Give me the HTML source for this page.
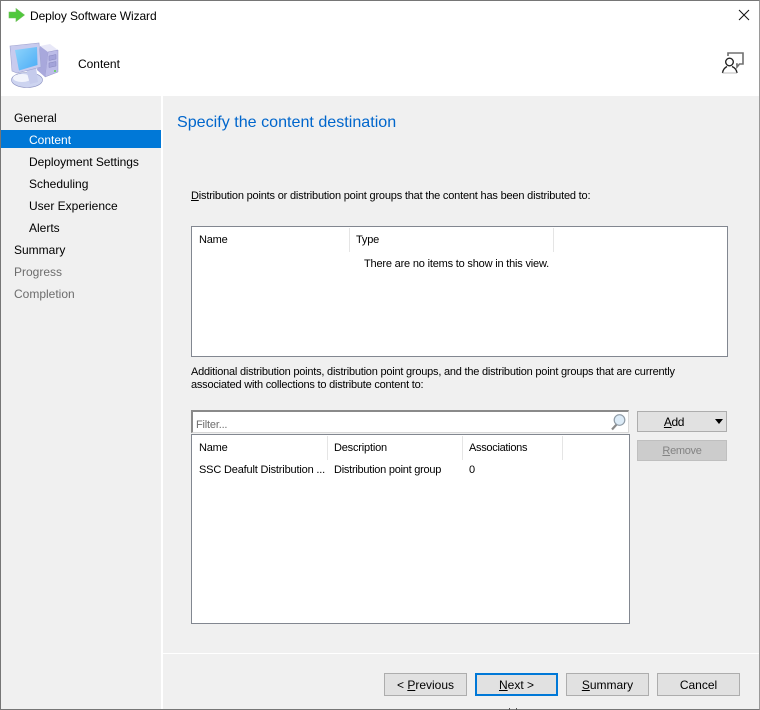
<!DOCTYPE html>
<html><head><meta charset="utf-8"><style>
html,body{margin:0;padding:0;background:#fff}
#w{position:relative;width:760px;height:710px;overflow:hidden;background:#fff;font-family:"Liberation Sans",sans-serif;font-size:12px;color:#000}
#w div{position:absolute;box-sizing:border-box;white-space:nowrap}
.t{line-height:16px;height:16px}
.m{font-size:11px;letter-spacing:-.19px}
u{text-underline-offset:1px}
.box{background:#fff;border:1px solid #828790}
.sep{width:1px;background:#e5e5e5}
.btn{background:#e1e1e1;border:1px solid #adadad;text-align:center;line-height:23px}
</style></head><body><div id="w">
<div style="left:1px;top:96px;width:160px;height:613px;background:#f0f0f0"></div>
<div style="left:163px;top:96px;width:596px;height:613px;background:#f0f0f0"></div>
<div style="left:163px;top:653px;width:596px;height:1px;background:#fff"></div>
<div style="left:0;top:0;width:760px;height:710px;border:1px solid #767676;border-right-color:#9a9a9a;z-index:5"></div>
<div style="left:509px;top:708px;width:1px;height:2px;background:#555;z-index:6"></div>
<div style="left:516px;top:708px;width:1px;height:2px;background:#555;z-index:6"></div>

<svg style="position:absolute;left:8px;top:7px" width="18" height="16" viewBox="0 0 18 16"><path d="M1 5H8V1.500L16.500 8 8 14.500V11H1Z" fill="#4fc83c" stroke="#6fbf5a" stroke-width=".6"/></svg>
<div class="t" style="left:30px;top:8px;letter-spacing:-.1px">Deploy Software Wizard</div>
<svg style="position:absolute;left:738px;top:9px" width="12" height="12" viewBox="0 0 12 12"><path d="M1 1 11 11M11 1 1 11" stroke="#111" stroke-width="1" fill="none"/></svg>

<svg style="position:absolute;left:0;top:35px" width="70" height="60" viewBox="0 0 70 60">
<defs><linearGradient id="g" x1="0" y1="0" x2="1" y2="1"><stop offset="0" stop-color="#8fd4fb"/><stop offset="1" stop-color="#4aacf6"/></linearGradient></defs>
<path d="M40 11 50 9 58 15 48 17Z" fill="#e8e8f8"/>
<path d="M48 17 58 15V37L45 42Z" fill="#bcbce8" stroke="#9494c8" stroke-width=".5"/>
<path d="M40 11 48 17 45 42 37 35Z" fill="#a8a8dc"/>
<path d="M49 21 56 19.500V24L49 25.500ZM49 28 56 26.500V31L49 32.500Z" fill="#a4a4da" stroke="#8787be" stroke-width=".5"/>
<rect x="54" y="35" width="2" height="2" fill="#6fd06f"/>
<ellipse cx="27" cy="45" rx="15.500" ry="7.500" fill="#cdd4f0" stroke="#8a90c0" stroke-width=".6"/>
<ellipse cx="22" cy="43" rx="9" ry="4" fill="#f2f4fc"/>
<path d="M26 34 36 32 38 47 30 49Z" fill="#c5cbec"/>
<path d="M10 11 39 8 41 32 17 38 12 36Z" fill="#c8cbee" stroke="#a0a4d0" stroke-width=".6"/>
<path d="M15 15 37 12 37.500 30 19 35.500Z" fill="url(#g)"/>
</svg>
<div class="t" style="left:78px;top:56px;letter-spacing:-.02px">Content</div>
<svg style="position:absolute;left:715px;top:45px" width="35" height="35" viewBox="0 0 35 35" fill="none"><path d="M13 11V8H28V19H24.500L22 22V19H21" stroke="#707070" stroke-width="1.600"/><circle cx="14.500" cy="17" r="3.800" stroke="#222" stroke-width="1.400"/><path d="M7.500 28C8 24 10 22.500 12 21.500M22 28C21.500 24 19.500 22.500 17 21.500" stroke="#222" stroke-width="1.400"/><path d="M7.500 28H22" stroke="#aaa" stroke-width=".8"/></svg>

<div style="left:1px;top:130px;width:160px;height:18px;background:#0078d7"></div>
<div class="t" style="left:14px;top:110px">General</div>
<div class="t" style="left:29px;top:132px;color:#fff">Content</div>
<div class="t" style="left:29px;top:154px;letter-spacing:-.05px">Deployment Settings</div>
<div class="t" style="left:29px;top:176px">Scheduling</div>
<div class="t" style="left:29px;top:198px">User Experience</div>
<div class="t" style="left:29px;top:220px">Alerts</div>
<div class="t" style="left:14px;top:242px">Summary</div>
<div class="t" style="left:14px;top:264px;color:#6d6d6d">Progress</div>
<div class="t" style="left:14px;top:286px;color:#6d6d6d">Completion</div>

<div style="left:177px;top:112px;font-size:16.100px;line-height:21px;color:#0066cc">Specify the content destination</div>
<div class="t m" style="left:191px;top:188px"><u>D</u>istribution points or distribution point groups that the content has been distributed to:</div>

<div class="box" style="left:191px;top:226px;width:537px;height:131px"></div>
<div class="t m" style="left:199px;top:232px">Name</div>
<div class="sep" style="left:349px;top:228px;height:24px"></div>
<div class="t m" style="left:356px;top:232px">Type</div>
<div class="sep" style="left:553px;top:228px;height:24px"></div>
<div class="t m" style="left:364px;top:256px">There are no items to show in this view.</div>

<div class="t m" style="left:191px;top:364px;letter-spacing:-.22px">Additional distribution points, distribution point groups, and the distribution point groups that are currently</div>
<div class="t m" style="left:191px;top:377px;letter-spacing:-.22px">associated with collections to distribute content to:</div>

<div style="left:191px;top:410px;width:438px;height:23px;background:#fff;border:1px solid #d8d8d8;border-top:2px solid #8a8a8a;border-left:2px solid #8a8a8a"></div>
<div class="t m" style="left:196px;top:417px;color:#6d6d6d">Filter...</div>
<svg style="position:absolute;left:610px;top:413px" width="17" height="18" viewBox="0 0 17 18"><path d="M2 16.500 7 11" stroke="#8a8a8a" stroke-width="2.200"/><circle cx="9.500" cy="7" r="5.300" fill="#dcebf7" stroke="#8f9ba6" stroke-width="1.200"/></svg>

<div class="box" style="left:191px;top:434px;width:439px;height:190px"></div>
<div class="t m" style="left:199px;top:440px">Name</div>
<div class="sep" style="left:327px;top:436px;height:24px"></div>
<div class="t m" style="left:334px;top:440px">Description</div>
<div class="sep" style="left:462px;top:436px;height:24px"></div>
<div class="t m" style="left:469px;top:440px;letter-spacing:-.3px">Associations</div>
<div class="sep" style="left:562px;top:436px;height:24px"></div>
<div class="t m" style="left:199px;top:462px;letter-spacing:-.17px">SSC Deafult Distribution ...</div>
<div class="t m" style="left:334px;top:462px;letter-spacing:-.25px">Distribution point group</div>
<div class="t m" style="left:469px;top:462px">0</div>

<div class="btn m" style="left:637px;top:411px;width:90px;height:21px;line-height:21px;padding-right:16px;font-size:12px;letter-spacing:-.4px"><u>A</u>dd</div>
<div style="left:715px;top:419px;width:0;height:0;border-left:4.500px solid transparent;border-right:4.500px solid transparent;border-top:5px solid #000"></div>
<div class="btn m" style="left:637px;top:440px;width:90px;height:21px;line-height:21px;background:#ccc;border-color:#bfbfbf;color:#838383;letter-spacing:-.3px"><u>R</u>emove</div>

<div class="btn" style="left:384px;top:673px;width:83px;height:23px">&lt; <u>P</u>revious</div>
<div class="btn" style="left:475px;top:673px;width:83px;height:23px;border:2px solid #0078d7;line-height:21px"><u>N</u>ext &gt;</div>
<div class="btn" style="left:566px;top:673px;width:83px;height:23px"><u>S</u>ummary</div>
<div class="btn" style="left:657px;top:673px;width:83px;height:23px">Cancel</div>
</div></body></html>
